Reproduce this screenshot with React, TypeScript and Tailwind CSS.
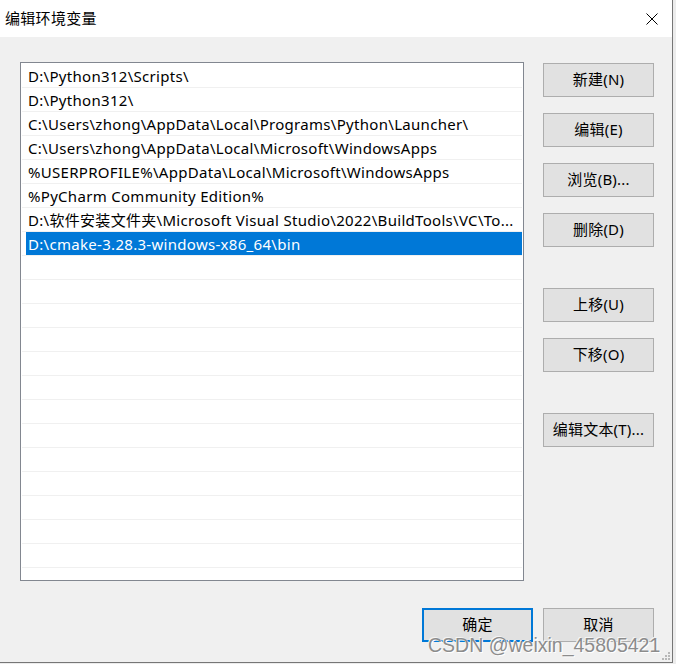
import React from "react";

const paths = [
  "D:\\Python312\\Scripts\\",
  "D:\\Python312\\",
  "C:\\Users\\zhong\\AppData\\Local\\Programs\\Python\\Launcher\\",
  "C:\\Users\\zhong\\AppData\\Local\\Microsoft\\WindowsApps",
  "%USERPROFILE%\\AppData\\Local\\Microsoft\\WindowsApps",
  "%PyCharm Community Edition%",
  "D:\\软件安装文件夹\\Microsoft Visual Studio\\2022\\BuildTools\\VC\\To...",
  "D:\\cmake-3.28.3-windows-x86_64\\bin",
];

const SELECTED = 7;
const TOTAL_ROWS = 22;

function Btn({ label, primary }: { label: string; primary?: boolean }) {
  return (
    <div
      className={
        "w-[111px] h-[34px] flex items-center justify-center pb-[1px] bg-[#e1e1e1] text-[15px] tracking-[0.2px] text-black " +
        (primary ? "border-2 border-[#0078d7]" : "border border-[#adadad]")
      }
    >
      {label}
    </div>
  );
}

export default function App() {
  const rows = Array.from({ length: TOTAL_ROWS }, (_, i) => paths[i] ?? "");

  return (
    <div className="w-[676px] h-[664px] overflow-hidden bg-[#ececec] font-['Noto_Sans','Noto_Sans_CJK_SC',sans-serif]">
      <div className="relative w-[673px] h-[663px] flex flex-col bg-[#f0f0f0] border-r border-b border-[#767676]">
        {/* title bar */}
        <div className="h-[37px] bg-white flex items-center justify-between pl-[5px] pr-[14px]">
          <span className="text-[15px] tracking-[0.3px] text-black">编辑环境变量</span>
          <svg width="12" height="12" viewBox="0 0 12 12">
            <path d="M0.5 0.5 L11.5 11.5 M11.5 0.5 L0.5 11.5" stroke="#000" strokeWidth="1" />
          </svg>
        </div>

        {/* body */}
        <div className="flex flex-col pl-[20px] pt-[25px]">
          <div className="flex gap-[19px]">
            {/* path list */}
            <div className="w-[504px] h-[519px] bg-white border border-[#828790] pt-[1px] px-[1px] overflow-hidden">
              {rows.map((p, i) => (
                <div key={i} className="h-[24px] border-b border-[#f0f0f0] flex">
                  <div
                    className={
                      "ml-[4px] flex-1 flex items-center pl-[2px] pt-[2px] text-[15px] tracking-[0.3px] whitespace-nowrap overflow-hidden " +
                      (i === SELECTED ? "bg-[#0078d7] text-white" : "text-black")
                    }
                  >
                    {p}
                  </div>
                </div>
              ))}
            </div>

            {/* side buttons */}
            <div className="flex flex-col pt-[1px]">
              <div className="flex flex-col gap-[16px]">
                <Btn label="新建(N)" />
                <Btn label="编辑(E)" />
                <Btn label="浏览(B)..." />
                <Btn label="删除(D)" />
              </div>
              <div className="flex flex-col gap-[16px] mt-[41px]">
                <Btn label="上移(U)" />
                <Btn label="下移(O)" />
              </div>
              <div className="mt-[41px]">
                <Btn label="编辑文本(T)..." />
              </div>
            </div>
          </div>

          <div className="flex gap-[10px] pl-[402px] mt-[27px]">
            <Btn label="确定" primary />
            <Btn label="取消" />
          </div>
        </div>

        {/* watermark */}
        <div className="absolute left-[428px] top-[635px] text-[19.5px] leading-[20px] text-[#8c8c8c] font-['Liberation_Sans',sans-serif] [text-shadow:1px_1px_0_#ffffff,-1px_-1px_0_#f4f4f4] whitespace-nowrap">
          CSDN @weixin_45805421
        </div>

        {/* resize grip */}
        <svg className="absolute right-[1px] bottom-[1px]" width="10" height="10" viewBox="0 0 10 10">
          <rect x="7" y="1" width="2" height="2" fill="#b8b8b8" />
          <rect x="4" y="4" width="2" height="2" fill="#b8b8b8" />
          <rect x="7" y="4" width="2" height="2" fill="#b8b8b8" />
          <rect x="1" y="7" width="2" height="2" fill="#b8b8b8" />
          <rect x="4" y="7" width="2" height="2" fill="#b8b8b8" />
          <rect x="7" y="7" width="2" height="2" fill="#b8b8b8" />
        </svg>
      </div>
    </div>
  );
}
